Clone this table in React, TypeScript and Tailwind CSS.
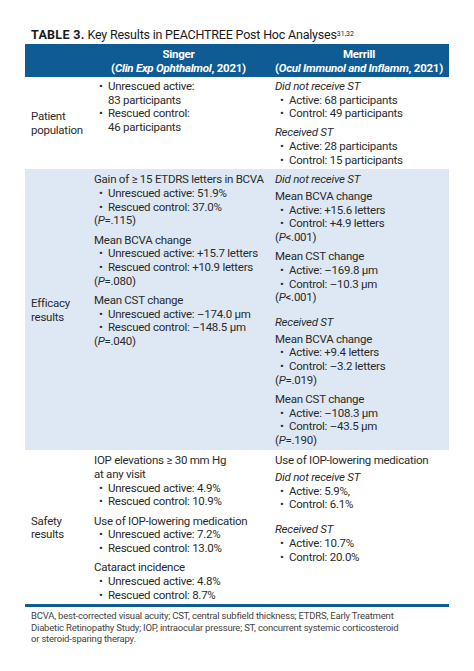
import React from "react";

const Bullet = ({ children }: { children: React.ReactNode }) => (
  <div className="flex pl-[5px]">
    <span className="w-[9px] shrink-0 tracking-normal">•</span>
    <span>{children}</span>
  </div>
);

const It = ({ children }: { children: React.ReactNode }) => <i className="italic">{children}</i>;

const P = ({ op, v }: { op: string; v: string }) => (
  <div>
    (<It>P</It>
    {op}
    {v})
  </div>
);

export default function App() {
  return (
    <div
      className="w-[474px] h-[671px] bg-white text-[#2b2b2b]"
      style={{ fontFamily: "Roboto, 'Noto Sans', sans-serif" }}
    >
      <div className="pt-[27px] pl-[31px] text-[12.5px] leading-[16px] tracking-[-0.2px] text-[#1a1a1a]">
        <span className="font-bold tracking-[0.3px]">TABLE 3.</span> Key Results in PEACHTREE Post Hoc Analyses
        <sup className="text-[7px] tracking-normal">31,32</sup>
      </div>
      <div className="mx-[25px] mt-[1px] w-[424px] text-[11.5px] leading-[13.7px] tracking-[-0.25px]">
        {/* header */}
        <div className="grid grid-cols-[63px_181px_180px] bg-[#0f5b94] text-white font-bold h-[33px] pt-[3px] leading-[14px]">
          <div />
          <div className="text-center">
            Singer
            <br />(<It>Clin Exp Ophthalmol</It>, 2021)
          </div>
          <div className="text-center">
            Merrill
            <br />(<It>Ocul Immunol and Inflamm</It>, 2021)
          </div>
        </div>
        {/* patient population */}
        <div className="grid grid-cols-[63px_181px_180px] pt-[3px] pb-[2px]">
          <div className="pl-[6px] self-center">
            Patient
            <br />
            population
          </div>
          <div className="pl-[6px]">
            <Bullet>
              Unrescued active:
              <br />
              83 participants
            </Bullet>
            <Bullet>
              Rescued control:
              <br />
              46 participants
            </Bullet>
          </div>
          <div className="pl-[6px]">
            <div className="italic">Did not receive ST</div>
            <Bullet>Active: 68 participants</Bullet>
            <Bullet>Control: 49 participants</Bullet>
            <div className="italic mt-[5px]">Received ST</div>
            <Bullet>Active: 28 participants</Bullet>
            <Bullet>Control: 15 participants</Bullet>
          </div>
        </div>
        {/* efficacy */}
        <div className="grid grid-cols-[63px_181px_180px] bg-[#dde8f4] pt-[4px] pb-[2.5px]">
          <div className="pl-[6px] self-center">
            Efficacy
            <br />
            results
          </div>
          <div className="pl-[6px]">
            <div>Gain of ≥ 15 ETDRS letters in BCVA</div>
            <Bullet>Unrescued active: 51.9%</Bullet>
            <Bullet>Rescued control: 37.0%</Bullet>
            <P op="=" v=".115" />
            <div className="mt-[5.5px]">Mean BCVA change</div>
            <Bullet>Unrescued active: +15.7 letters</Bullet>
            <Bullet>Rescued control: +10.9 letters</Bullet>
            <P op="=" v=".080" />
            <div className="mt-[5.5px]">Mean CST change</div>
            <Bullet>Unrescued active: –174.0 μm</Bullet>
            <Bullet>Rescued control: –148.5 μm</Bullet>
            <P op="=" v=".040" />
          </div>
          <div className="pl-[6px]">
            <div className="italic mb-[3px]">Did not receive ST</div>
            <div>Mean BCVA change</div>
            <Bullet>Active: +15.6 letters</Bullet>
            <Bullet>Control: +4.9 letters</Bullet>
            <P op="<" v=".001" />
            <div className="mt-[5.5px]">Mean CST change</div>
            <Bullet>Active: –169.8 μm</Bullet>
            <Bullet>Control: –10.3 μm</Bullet>
            <P op="<" v=".001" />
            <div className="italic mt-[11px] mb-[3px]">Received ST</div>
            <div>Mean BCVA change</div>
            <Bullet>Active: +9.4 letters</Bullet>
            <Bullet>Control: –3.2 letters</Bullet>
            <P op="=" v=".019" />
            <div className="mt-[5.5px]">Mean CST change</div>
            <Bullet>Active: –108.3 μm</Bullet>
            <Bullet>Control: –43.5 μm</Bullet>
            <P op="=" v=".190" />
          </div>
        </div>
        {/* safety */}
        <div className="grid grid-cols-[63px_181px_180px] pt-[4px] pb-[2px] border-b-[3px] border-[#0f5b94]">
          <div className="pl-[6px] self-center">
            Safety
            <br />
            results
          </div>
          <div className="pl-[6px]">
            <div>
              IOP elevations ≥ 30 mm Hg
              <br />
              at any visit
            </div>
            <Bullet>Unrescued active: 4.9%</Bullet>
            <Bullet>Rescued control: 10.9%</Bullet>
            <div className="mt-[5.5px]">Use of IOP-lowering medication</div>
            <Bullet>Unrescued active: 7.2%</Bullet>
            <Bullet>Rescued control: 13.0%</Bullet>
            <div className="mt-[5.5px]">Cataract incidence</div>
            <Bullet>Unrescued active: 4.8%</Bullet>
            <Bullet>Rescued control: 8.7%</Bullet>
          </div>
          <div className="pl-[6px]">
            <div className="mb-[3px]">Use of IOP-lowering medication</div>
            <div className="italic">Did not receive ST</div>
            <Bullet>Active: 5.9%,</Bullet>
            <Bullet>Control: 6.1%</Bullet>
            <div className="italic mt-[11px]">Received ST</div>
            <Bullet>Active: 10.7%</Bullet>
            <Bullet>Control: 20.0%</Bullet>
          </div>
        </div>
        <div className="pl-[6px] pt-[3px] text-[9.5px] leading-[11.5px] tracking-[-0.2px] text-[#444]">
          BCVA, best-corrected visual acuity; CST, central subfield thickness; ETDRS, Early Treatment
          <br />
          Diabetic Retinopathy Study; IOP, intraocular pressure; ST, concurrent systemic corticosteroid
          <br />
          or steroid-sparing therapy.
        </div>
      </div>
    </div>
  );
}
